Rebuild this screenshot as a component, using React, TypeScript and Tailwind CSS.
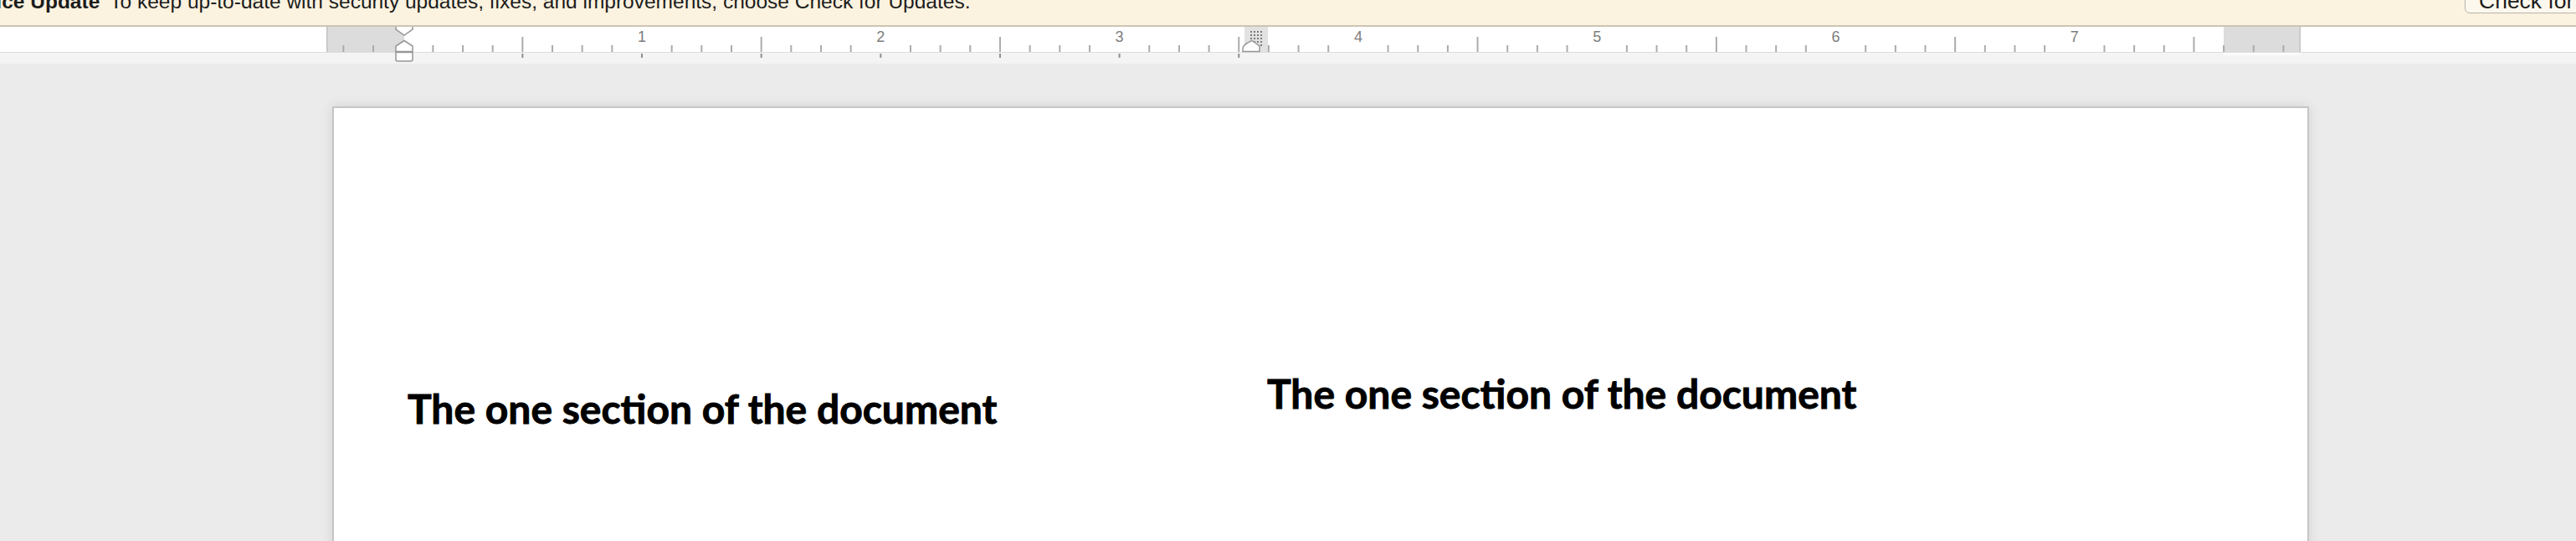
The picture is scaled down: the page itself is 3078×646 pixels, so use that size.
const INCH = 285.3;
const ZERO = 481.7;
const EIGHTH = INCH / 8;

function Ruler() {
  const ticks = [];
  for (let k = -2; k <= 63; k++) {
    if (k % 8 === 0) continue;
    const x = ZERO + k * EIGHTH;
    const half = k % 4 === 0;
    ticks.push(
      <line key={`t${k}`} x1={x} x2={x} y1={half ? 44 : 54} y2={62} stroke="#ababab" strokeWidth={2} />
    );
  }
  // default tab stops under the left column
  const tabs = [];
  for (let k = 4; k <= 28; k += 4) {
    const x = ZERO + k * EIGHTH;
    tabs.push(<line key={`tab${k}`} x1={x} x2={x} y1={64} y2={69} stroke="#8f8f8f" strokeWidth={2} />);
  }
  const dots = [];
  for (let c = 0; c < 4; c++) {
    for (let r = 0; r < 5; r++) {
      dots.push(<rect key={`d${c}-${r}`} x={1494 + c * 4} y={37 + r * 4} width={2} height={2} fill="#7c7c7c" />);
    }
  }

  return (
    <svg width={2360} height={44} viewBox="390 32 2360 44" className="block">
      {/* margins */}
      <rect x={390} y={32} width={93} height={30} fill="#dcdcdc" />
      <rect x={390} y={32} width={1.5} height={30} fill="#c2c2c2" />
      <rect x={2657} y={32} width={92} height={30} fill="#dcdcdc" />
      <rect x={2747.5} y={32} width={1.5} height={30} fill="#c2c2c2" />
      <rect x={2657} y={63} width={92} height={3} fill="#fbfbfb" />
      {/* column gap */}
      <rect x={1487} y={32} width={28} height={30} fill="#e2e2e2" />
      {dots}
      {ticks}
      {tabs}
      {[1, 2, 3, 4, 5, 6, 7].map((n) => (
        <text
          key={n}
          x={ZERO + n * INCH}
          y={50}
          textAnchor="middle"
          fontSize={18}
          fill="#7d7d7d"
          fontFamily="'Liberation Sans', Arial, sans-serif"
        >
          {n}
        </text>
      ))}
      {/* first line indent */}
      <path d="M473,31 L493,31 L493,35 L483,42 L473,35 Z" fill="#fff" stroke="#979797" strokeWidth={1.5} />
      {/* hanging indent */}
      <path d="M483,48.5 L493,55 L493,61.5 L473,61.5 L473,55 Z" fill="#fff" stroke="#979797" strokeWidth={1.5} />
      {/* left indent */}
      <path d="M473,62.5 L493,62.5 L493,71 Q493,73 491,73 L475,73 Q473,73 473,71 Z" fill="#fff" stroke="#979797" strokeWidth={1.5} />
      {/* right indent */}
      <path d="M1496,48.5 L1505,55 L1505,61.5 L1485,61.5 L1485,57 Q1487,52 1496,48.5 Z" fill="#fff" stroke="#979797" strokeWidth={1.5} />
    </svg>
  );
}

export default function App() {
  return (
    <div className="w-[3078px] h-[646px] overflow-hidden bg-[#ebebeb]">
      {/* Office update bar */}
      <div className="h-[32px] flex items-start overflow-hidden bg-[#fbf2df] border-b-2 border-[#cdc4b2] font-['Liberation_Sans',Arial,sans-serif] text-[24.5px] leading-[24px] text-[#1c1c1c]">
        <span className="mt-[-10px] ml-[-40px] font-bold whitespace-nowrap">Office Update</span>
        <span className="mt-[-10px] ml-[12px] whitespace-nowrap">
          To keep up-to-date with security updates, fixes, and improvements, choose Check for Updates.
        </span>
        <button className="ml-auto mr-[-130px] mt-[-14px] h-[30px] w-[263px] shrink-0 flex items-center pl-[16px] rounded-[6px] border-[1.5px] border-[#b7b3ab] bg-[#fdf8ee] whitespace-nowrap text-[26.5px]">
          Check for Updates
        </button>
      </div>

      {/* Ruler */}
      <div className="h-[44px] pl-[390px] bg-[linear-gradient(to_bottom,#ffffff_0px,#ffffff_30px,#dcdcdc_30px,#dcdcdc_31px,#f4f4f4_31px)]">
        <Ruler />
      </div>

      {/* Page */}
      <div className="pt-[51px] pl-[397px]">
        <div className="w-[2362px] h-[700px] bg-white border-2 border-[#c6c6c6] shadow-[0_0_14px_rgba(0,0,0,0.10)]">
          <div className="flex items-start pl-[88px] font-['Lato',sans-serif] text-[48px] leading-none font-bold text-black [-webkit-text-stroke:0.9px_#000]">
            <div className="w-[1027px] shrink-0">
              <h1 className="mt-[335px] whitespace-nowrap">The one section of the document</h1>
            </div>
            <div>
              <h1 className="mt-[317px] whitespace-nowrap">The one section of the document</h1>
            </div>
          </div>
        </div>
      </div>
    </div>
  );
}
